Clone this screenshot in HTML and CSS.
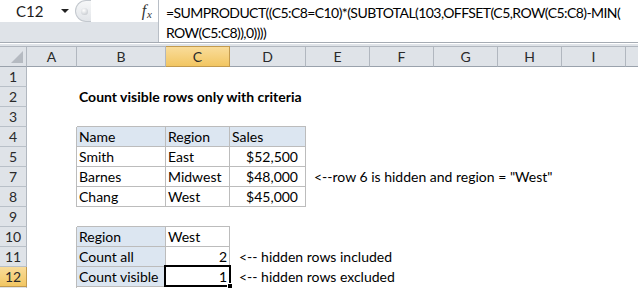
FILE: index.html
```html
<!DOCTYPE html>
<html lang="en">

<head>
    <meta charset="UTF-8">
    <title>Count visible rows only with criteria</title>
    <link rel="stylesheet" href="styles.css">
</head>

<body>
    <div class="formula-bar">
        <div class="bar-left">
            <div class="name-row">
                <div class="name-box">C12 <span class="drop"></span></div>
                <div class="knob"><span class="dot"></span></div>
                <div class="fx"><i>f</i><i class="x">x</i></div>
            </div>
            <div class="bar-gap"></div>
        </div>
        <div class="formula">
            <div>=SUMPRODUCT((C5:C8=C10)*(SUBTOTAL(103,OFFSET(C5,ROW(C5:C8)-MIN(</div>
            <div>ROW(C5:C8)),0))))</div>
        </div>
    </div>
    <div class="strip"></div>

    <div class="sheet">
        <!-- column headers -->
        <div class="corner"><span class="tri"></span></div>
        <div class="ch">A</div>
        <div class="ch">B</div>
        <div class="ch sel">C</div>
        <div class="ch">D</div>
        <div class="ch">E</div>
        <div class="ch">F</div>
        <div class="ch">G</div>
        <div class="ch">H</div>
        <div class="ch">I</div>
        <div class="ch last"></div>

        <!-- row 1 -->
        <div class="rh">1</div>
        <div class="c"></div><div class="c"></div><div class="c"></div><div class="c"></div><div class="c"></div>
        <div class="c"></div><div class="c"></div><div class="c"></div><div class="c"></div><div class="c"></div>

        <!-- row 2 -->
        <div class="rh">2</div>
        <div class="c"></div>
        <div class="c title">Count visible rows only with criteria</div>
        <div class="c"></div><div class="c"></div><div class="c"></div>
        <div class="c"></div><div class="c"></div><div class="c"></div><div class="c"></div><div class="c"></div>

        <!-- row 3 -->
        <div class="rh">3</div>
        <div class="c"></div>
        <div class="c eb"></div><div class="c eb"></div><div class="c eb"></div>
        <div class="c"></div><div class="c"></div><div class="c"></div><div class="c"></div><div class="c"></div><div class="c"></div>

        <!-- row 4 -->
        <div class="rh">4</div>
        <div class="c er"></div>
        <div class="c t hd">Name</div>
        <div class="c t hd">Region</div>
        <div class="c t hd">Sales</div>
        <div class="c"></div><div class="c"></div><div class="c"></div><div class="c"></div><div class="c"></div><div class="c"></div>

        <!-- row 5 -->
        <div class="rh">5</div>
        <div class="c er"></div>
        <div class="c t">Smith</div>
        <div class="c t">East</div>
        <div class="c t num money">$52,500</div>
        <div class="c"></div><div class="c"></div><div class="c"></div><div class="c"></div><div class="c"></div><div class="c"></div>

        <!-- row 7 (row 6 hidden) -->
        <div class="rh">7</div>
        <div class="c er"></div>
        <div class="c t">Barnes</div>
        <div class="c t">Midwest</div>
        <div class="c t num money">$48,000</div>
        <div class="c note">&lt;--row 6 is hidden and region = "West"</div>
        <div class="c"></div><div class="c"></div><div class="c"></div><div class="c"></div><div class="c"></div>

        <!-- row 8 -->
        <div class="rh">8</div>
        <div class="c er"></div>
        <div class="c t">Chang</div>
        <div class="c t">West</div>
        <div class="c t num money">$45,000</div>
        <div class="c"></div><div class="c"></div><div class="c"></div><div class="c"></div><div class="c"></div><div class="c"></div>

        <!-- row 9 -->
        <div class="rh">9</div>
        <div class="c"></div>
        <div class="c eb"></div><div class="c eb"></div>
        <div class="c"></div><div class="c"></div><div class="c"></div><div class="c"></div><div class="c"></div><div class="c"></div><div class="c"></div>

        <!-- row 10 -->
        <div class="rh">10</div>
        <div class="c er"></div>
        <div class="c t hd">Region</div>
        <div class="c t">West</div>
        <div class="c"></div><div class="c"></div><div class="c"></div><div class="c"></div><div class="c"></div><div class="c"></div><div class="c"></div>

        <!-- row 11 -->
        <div class="rh">11</div>
        <div class="c er"></div>
        <div class="c t hd">Count all</div>
        <div class="c t num">2</div>
        <div class="c note2">&lt;-- hidden rows included</div>
        <div class="c"></div><div class="c"></div><div class="c"></div><div class="c"></div><div class="c"></div><div class="c"></div>

        <!-- row 12 -->
        <div class="rh sel">12</div>
        <div class="c er"></div>
        <div class="c t hd">Count visible</div>
        <div class="c t num active">1<span class="cursor"><span class="handle"></span></span></div>
        <div class="c note2">&lt;-- hidden rows excluded</div>
        <div class="c"></div><div class="c"></div><div class="c"></div><div class="c"></div><div class="c"></div><div class="c"></div>

        <!-- row 13, only its top edge shows -->
        <div class="rh"></div>
        <div class="c er"></div>
        <div class="c"></div><div class="c"></div><div class="c"></div><div class="c"></div><div class="c"></div>
        <div class="c"></div><div class="c"></div><div class="c"></div><div class="c"></div>
    </div>
</body>

</html>
```

FILE: styles.css
```css
* {
    margin: 0;
    padding: 0;
    box-sizing: border-box;
}

body {
    width: 638px;
    height: 288px;
    overflow: hidden;
    background-color: #fff;
    font-family: Lato, "Open Sans", sans-serif;
    font-size: 14px;
    color: #000;
}

/* formula bar */

.formula-bar {
    display: flex;
    height: 43px;
    border-bottom: 1px solid #a5abb3;
}

.bar-left {
    width: 159px;
    flex-shrink: 0;
    display: flex;
    flex-direction: column;
    border-right: 1px solid #b8bec6;
}

.name-row {
    display: flex;
    height: 22px;
    background-color: #fff;
}

.name-box {
    width: 75px;
    flex-shrink: 0;
    padding-left: 16px;
    line-height: 22px;
    font-size: 15px;
    color: #1b1b1b;
    display: flex;
    align-items: center;
}

.drop {
    margin-left: 18px;
    width: 0;
    height: 0;
    border-left: 4px solid transparent;
    border-right: 4px solid transparent;
    border-top: 4px solid #222;
}

.knob {
    width: 16px;
    flex-shrink: 0;
    height: 22px;
    border-radius: 11px 0 0 11px;
    border: 1px solid #c3c8ce;
    border-right: none;
    background: linear-gradient(#f6f7f8, #e2e5e9);
    display: flex;
    align-items: center;
    padding-left: 5px;
}

.dot {
    width: 7px;
    height: 7px;
    border-radius: 50%;
    background: radial-gradient(circle at 40% 35%, #fff, #b9bec4);
}

.fx {
    flex: 1;
    display: flex;
    justify-content: flex-end;
    align-items: center;
    padding-right: 6px;
    font-family: "Liberation Serif", serif;
    font-size: 16px;
    color: #333;
}

.fx .x {
    font-size: 11px;
    margin-top: 5px;
    margin-left: 1px;
}

.bar-gap {
    flex: 1;
    background-color: #dfe3e8;
}

.formula {
    flex: 1;
    min-width: 0;
    overflow: hidden;
    padding: 3px 0 0 7px;
    line-height: 20px;
    font-size: 14px;
    letter-spacing: -0.57px;
    white-space: nowrap;
}

.strip {
    height: 3px;
    background-color: #dfe3e8;
    border-top: 1px solid #fff;
}

/* sheet grid */

.sheet {
    display: grid;
    grid-template-columns: 27px 50px 89px 64px 76px 64px 64px 64px 64px 64px 1fr;
    grid-template-rows: 21px;
    grid-auto-rows: 20px;
}

.corner,
.ch,
.rh {
    background-color: #dfe3e8;
    color: #2a2a2a;
    border-right: 1px solid #b1b7bf;
    border-bottom: 1px solid #9aa2ac;
}

.corner {
    border-top: 1px solid #b1b7bf;
    position: relative;
}

.tri {
    position: absolute;
    right: 3px;
    bottom: 3px;
    width: 0;
    height: 0;
    border-left: 12px solid transparent;
    border-bottom: 12px solid #b5bac1;
}

.ch {
    border-top: 1px solid #b1b7bf;
    text-align: center;
    line-height: 19px;
}

.ch.last {
    border-right: none;
}

.rh {
    text-align: center;
    line-height: 19px;
    border-bottom-color: #b9c0c8;
}

.ch.sel,
.rh.sel {
    background: linear-gradient(#f9dc9a, #f2c662);
    border-color: #c29a4e;
}

.c {
    padding: 0 2px;
    line-height: 20px;
    white-space: nowrap;
}

.title {
    font-weight: bold;
}

.t {
    border-right: 1px solid #bcbcbc;
    border-bottom: 1px solid #bcbcbc;
    line-height: 19px;
}

.eb {
    border-bottom: 1px solid #bcbcbc;
}

.er {
    border-right: 1px solid #bcbcbc;
}

.hd {
    background-color: #dce6f1;
}

.num {
    text-align: right;
}

.money {
    padding-right: 7px;
}

.note {
    padding-left: 8px;
}

.note2 {
    padding-left: 9px;
}

.active {
    position: relative;
}

.cursor {
    position: absolute;
    left: -2px;
    top: -2px;
    right: -2px;
    bottom: -1px;
    border: 2px solid #000;
}

.handle {
    position: absolute;
    right: -4px;
    bottom: -4px;
    width: 6px;
    height: 6px;
    background-color: #000;
    border: 1px solid #fff;
}
```
